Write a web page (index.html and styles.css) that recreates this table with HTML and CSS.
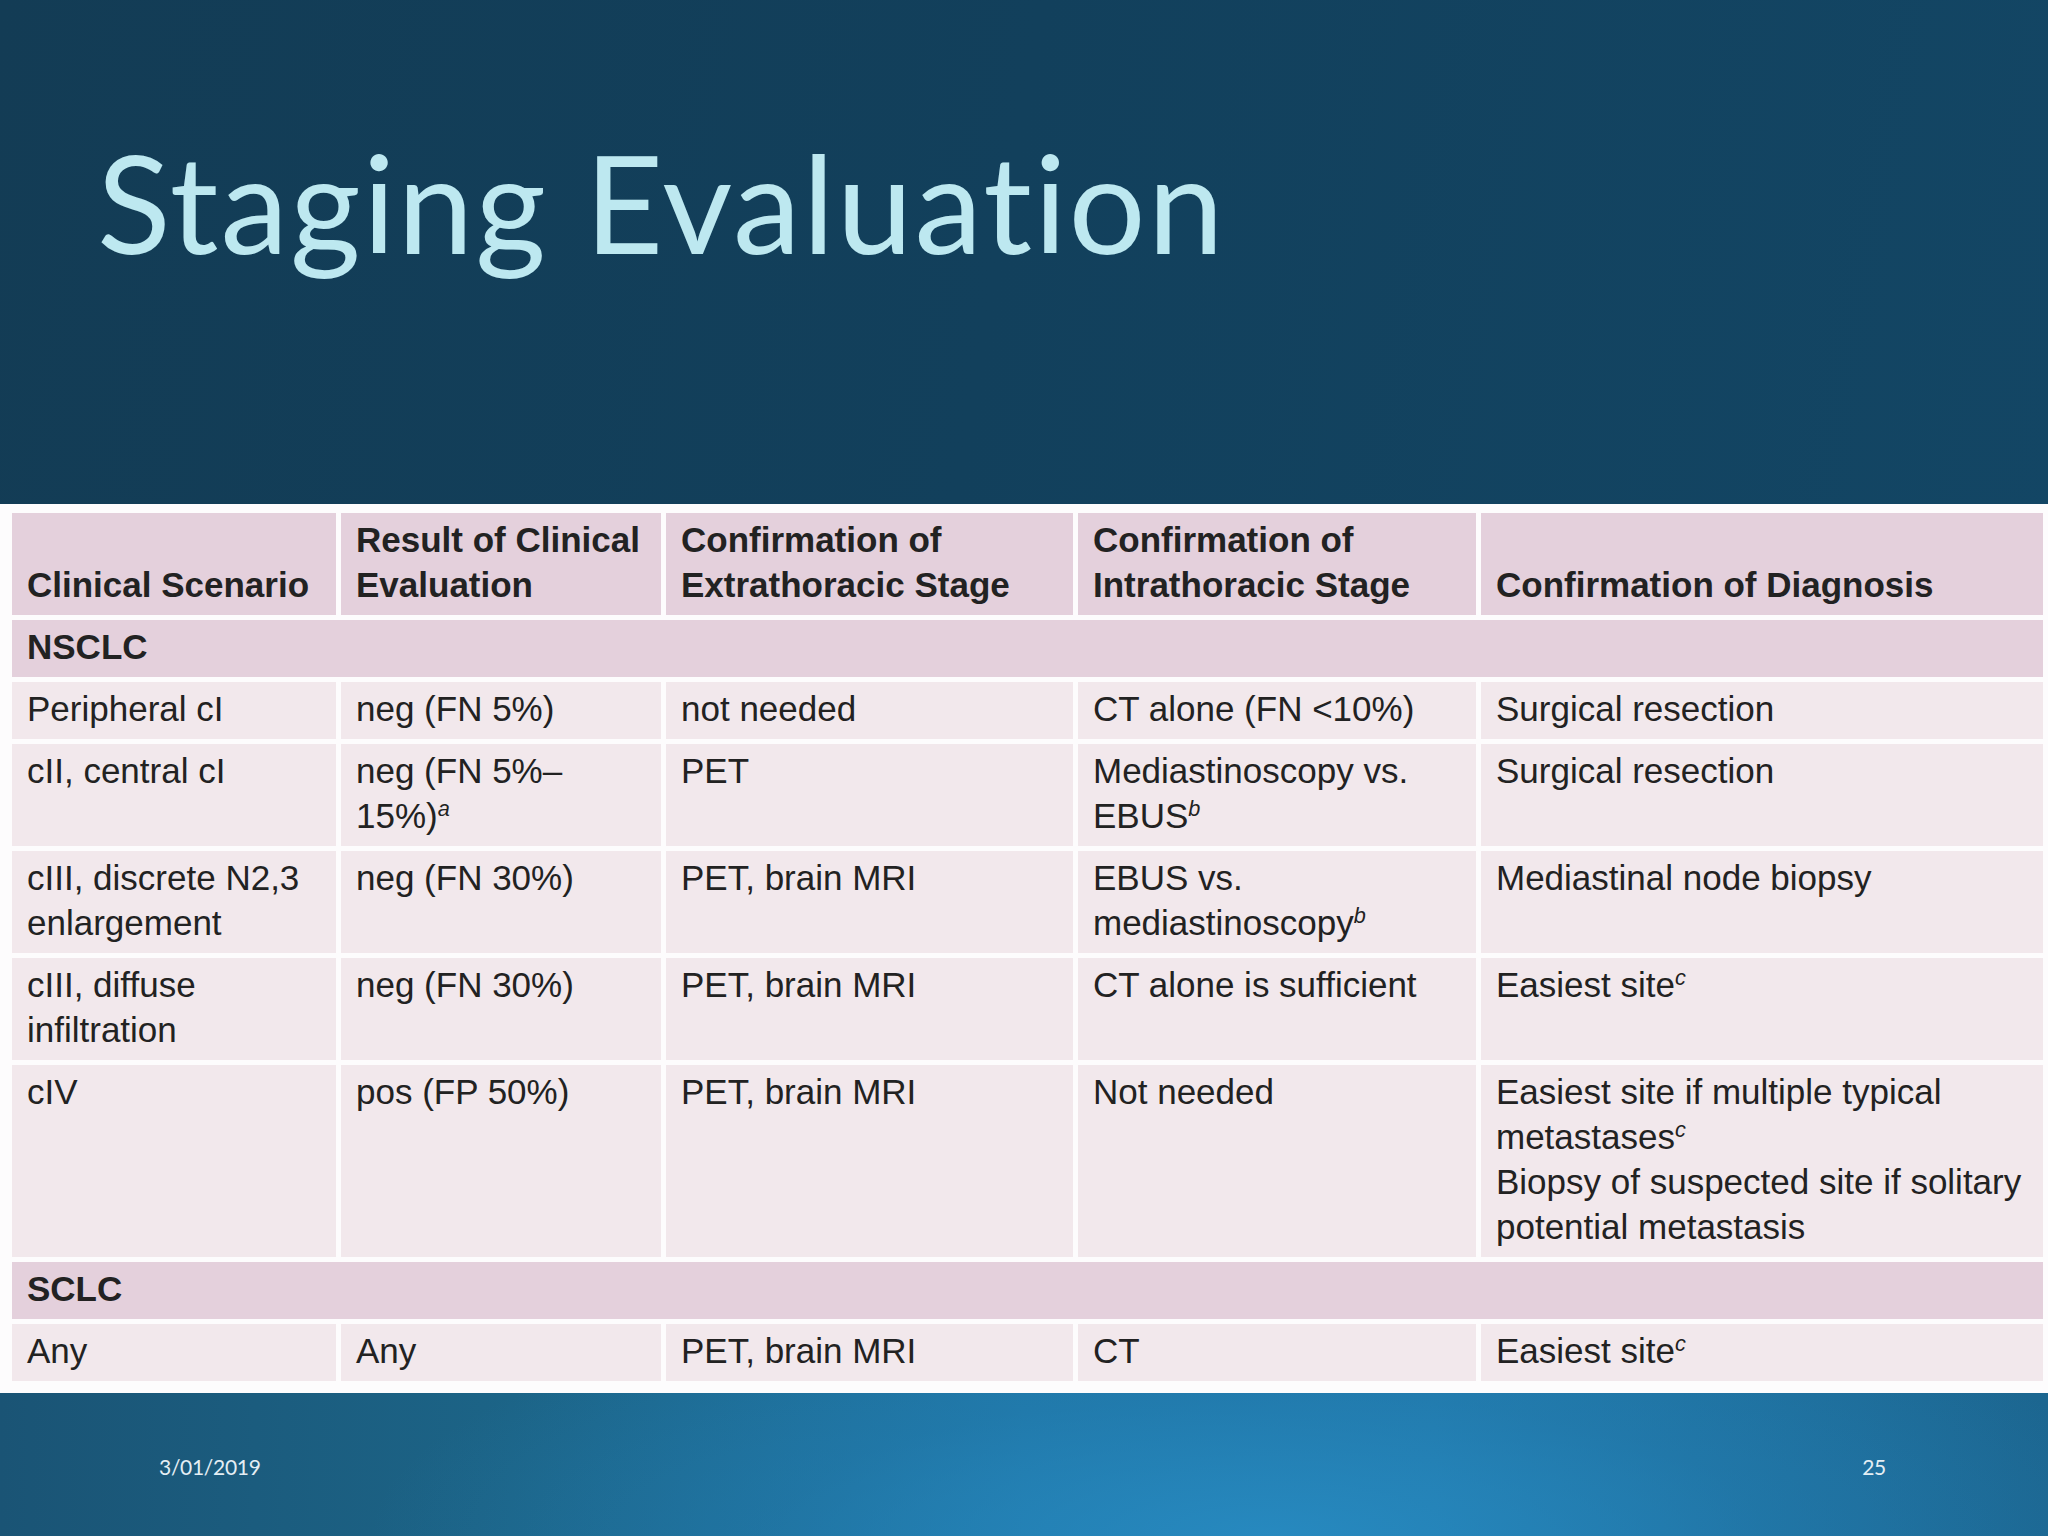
FILE: index.html
```html
<!DOCTYPE html>
<html lang="en">
<head>
<meta charset="utf-8">
<title>Staging Evaluation</title>
<link rel="stylesheet" href="styles.css">
</head>
<body>
<div class="slide">
  <header class="title-area">
    <h1 class="title">Staging Evaluation</h1>
  </header>
  <section class="table-wrap">
    <table class="staging">
      <colgroup>
        <col class="c1"><col class="c2"><col class="c3"><col class="c4"><col class="c5">
      </colgroup>
      <thead>
        <tr>
          <th>Clinical Scenario</th>
          <th>Result of Clinical<br>Evaluation</th>
          <th>Confirmation of<br>Extrathoracic Stage</th>
          <th>Confirmation of<br>Intrathoracic Stage</th>
          <th>Confirmation of Diagnosis</th>
        </tr>
      </thead>
      <tbody>
        <tr class="section"><td colspan="5">NSCLC</td></tr>
        <tr>
          <td>Peripheral cI</td>
          <td>neg (FN 5%)</td>
          <td>not needed</td>
          <td>CT alone (FN &lt;10%)</td>
          <td>Surgical resection</td>
        </tr>
        <tr>
          <td>cII, central cI</td>
          <td>neg (FN 5%–<br>15%)<sup>a</sup></td>
          <td>PET</td>
          <td>Mediastinoscopy vs.<br>EBUS<sup>b</sup></td>
          <td>Surgical resection</td>
        </tr>
        <tr>
          <td>cIII, discrete N2,3<br>enlargement</td>
          <td>neg (FN 30%)</td>
          <td>PET, brain MRI</td>
          <td>EBUS vs.<br>mediastinoscopy<sup>b</sup></td>
          <td>Mediastinal node biopsy</td>
        </tr>
        <tr>
          <td>cIII, diffuse<br>infiltration</td>
          <td>neg (FN 30%)</td>
          <td>PET, brain MRI</td>
          <td>CT alone is sufficient</td>
          <td>Easiest site<sup>c</sup></td>
        </tr>
        <tr>
          <td>cIV</td>
          <td>pos (FP 50%)</td>
          <td>PET, brain MRI</td>
          <td>Not needed</td>
          <td>Easiest site if multiple typical<br>metastases<sup>c</sup><br>Biopsy of suspected site if solitary<br>potential metastasis</td>
        </tr>
        <tr class="section"><td colspan="5">SCLC</td></tr>
        <tr>
          <td>Any</td>
          <td>Any</td>
          <td>PET, brain MRI</td>
          <td>CT</td>
          <td>Easiest site<sup>c</sup></td>
        </tr>
      </tbody>
    </table>
  </section>
  <footer class="footer">
    <span class="date">3/01/2019</span>
    <span class="page">25</span>
  </footer>
</div>
</body>
</html>
```

FILE: styles.css
```css
html, body {
  margin: 0;
  padding: 0;
}

body {
  width: 2048px;
  height: 1536px;
  overflow: hidden;
}

.slide {
  width: 2048px;
  height: 1536px;
  display: flex;
  flex-direction: column;
  background: linear-gradient(100deg, #133c55 0%, #12405c 45%, #134766 100%);
}

.title-area {
  height: 504px;
  box-sizing: border-box;
  padding: 134px 0 0 97px;
}

.title {
  margin: 0;
  font-family: Lato, "Open Sans", sans-serif;
  font-weight: 400;
  font-size: 136px;
  line-height: 136px;
  letter-spacing: 2px;
  color: #bde8f0;
}

.table-wrap {
  background: #fdfcfd;
  padding: 4px 0 7px 7px;
}

.staging {
  border-collapse: separate;
  border-spacing: 5px;
  table-layout: fixed;
  width: 2041px;
  font-family: "Liberation Sans", Arial, sans-serif;
  font-size: 35px;
  line-height: 45px;
  color: #222222;
}

.c1 { width: 324px; }
.c2 { width: 320px; }
.c3 { width: 407px; }
.c4 { width: 398px; }
.c5 { width: 562px; }

.staging th,
.staging td {
  padding: 4px 15px 8px 15px;
  text-align: left;
  vertical-align: top;
  white-space: nowrap;
  overflow: hidden;
}

.staging th {
  background: #e4d0dc;
  font-weight: 700;
  vertical-align: bottom;
}

.staging td {
  background: #f2e8ec;
  font-weight: 400;
}

.staging .section td {
  background: #e4d0dc;
  font-weight: 700;
}

.staging sup {
  font-size: 0.62em;
  font-style: italic;
  line-height: 0;
  vertical-align: 0.55em;
}

.footer {
  flex: 1;
  display: flex;
  justify-content: space-between;
  align-items: center;
  padding: 4px 162px 0 159px;
  font-family: Lato, "Open Sans", sans-serif;
  font-size: 21px;
  letter-spacing: -0.3px;
  color: #e4eef4;
  background:
    radial-gradient(ellipse 900px 260px at 62% 100%, rgba(40, 140, 195, 0.85) 0%, rgba(36, 128, 182, 0.4) 55%, rgba(30, 110, 160, 0) 100%),
    linear-gradient(90deg, #1a5475 0%, #1c6487 25%, #1f76a5 50%, #2179aa 70%, #1c6690 100%);
}
```
